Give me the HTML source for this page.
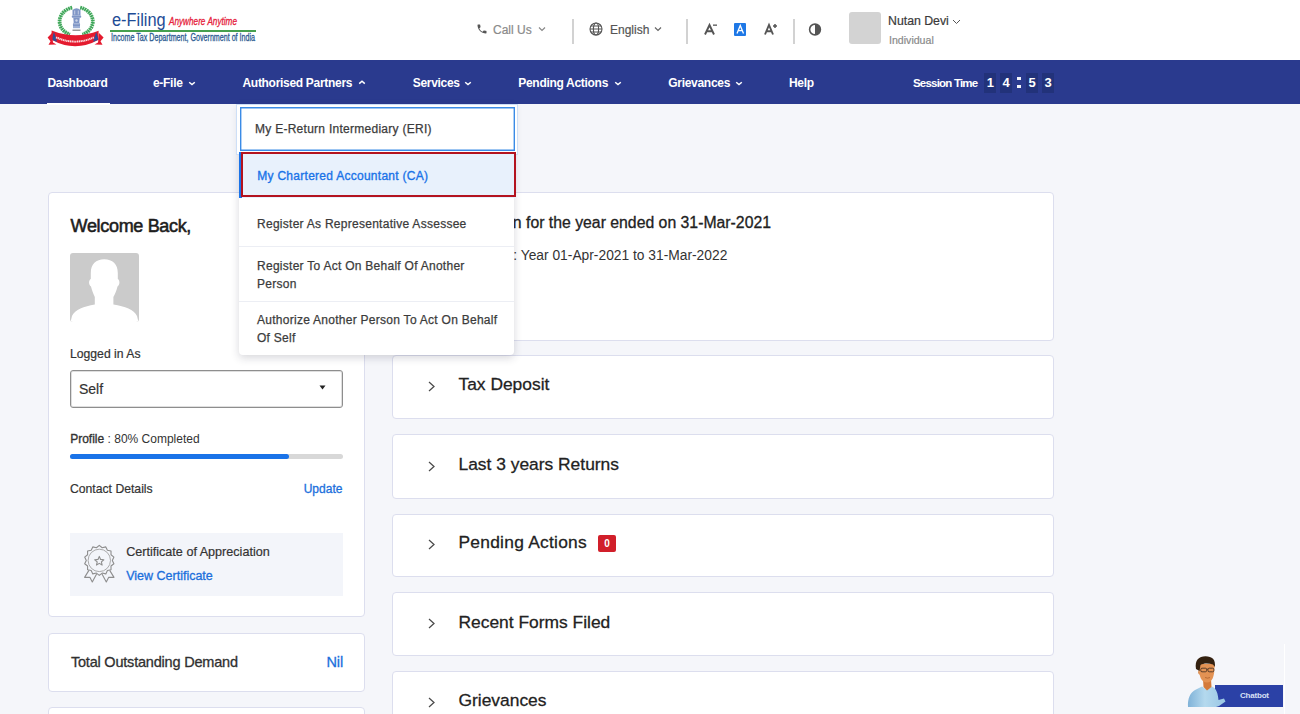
<!DOCTYPE html>
<html><head><meta charset="utf-8">
<style>
*{margin:0;padding:0;box-sizing:border-box}
html,body{width:1300px;height:714px;overflow:hidden;background:#f5f6fa;font-family:"Liberation Sans",sans-serif;color:#333}
.a{position:absolute;white-space:nowrap;line-height:1}
.s{position:absolute;overflow:visible}
#hdr{position:absolute;left:0;top:0;width:1300px;height:60px;background:#fff}
#nav{position:absolute;left:0;top:60px;width:1300px;height:44px;background:#2a3a8e}
.nv{color:#fff;font-weight:bold;font-size:12px;letter-spacing:-0.3px;top:77.1px}
.card{position:absolute;background:#fff;border:1px solid #dcdeee;border-radius:4px}
.sep{position:absolute;width:2px;background:#d2d2d2}
.rt{font-size:17.4px;color:#222;-webkit-text-stroke:0.28px #222;left:458.5px}
.dd{position:absolute;left:239px;top:104px;width:275px;height:251px;background:#fff;border-radius:0 0 4px 4px;box-shadow:0 3px 8px rgba(40,40,60,0.18)}
.di{color:#3d3d3d;font-size:12px;letter-spacing:0.27px;left:257px;-webkit-text-stroke:0.25px #3a3a3a}
.tb{position:absolute;top:73px;width:12px;height:19.5px;background:#22327a;color:#fff;font-weight:bold;font-size:13px;text-align:center;line-height:20px}
.md{-webkit-text-stroke:0.3px currentColor}
.md2{-webkit-text-stroke:0.35px currentColor}
.blue{color:#1b6fdc}
.rg{-webkit-text-stroke:0.2px currentColor}
</style></head><body>
<div id="hdr"></div>
<div id="nav"></div>

<!-- logo emblem -->
<svg class="s" style="left:46px;top:4px" width="62" height="46" viewBox="0 0 62 46">
  <g fill="none" stroke="#45ab5e">
    <path d="M26.18 3.62 A16.6 14.2 0 0 0 23.98 30.57" stroke-width="3.8" stroke-dasharray="1.7 0.6"/>
    <path d="M34.22 3.62 A16.6 14.2 0 0 1 36.42 30.57" stroke-width="3.8" stroke-dasharray="1.7 0.6"/>
  </g>
  <g fill="none" stroke="#2f9a4e" stroke-width="0.8" opacity="0.7">
    <path d="M26.18 3.62 A16.6 14.2 0 0 0 23.98 30.57"/>
    <path d="M34.22 3.62 A16.6 14.2 0 0 1 36.42 30.57"/>
  </g>
  <g fill="#7f96c6">
    <path d="M26.5 6 Q30.5 2.5 34.5 6 L34.5 11.5 L26.5 11.5 Z"/>
    <rect x="25.8" y="11.5" width="9.4" height="2.2" rx="0.8"/>
    <path d="M27.3 13.7 H33.7 L33.3 18.5 Q34.5 19.5 34 22 L27 22 Q26.5 19.5 27.7 18.5 Z"/>
    <rect x="27" y="22" width="7" height="2.2" fill="#9db0d6"/>
  </g>
  <g fill="#fff" opacity="0.6"><rect x="28.3" y="6.5" width="0.9" height="4"/><rect x="31.8" y="6.5" width="0.9" height="4"/><circle cx="30.5" cy="16.5" r="1.2"/><rect x="27.5" y="19.5" width="6" height="0.7"/></g>
  <rect x="26.5" y="25.6" width="8" height="1.2" fill="#555" opacity="0.75"/>
  <path d="M5.6 26.4 Q29.1 35.8 52.6 26.8 L52.6 35.7 Q29.1 48.7 5.6 35.7 Z" fill="#e41a2e"/>
  <path d="M5.6 35.7 L11 37.8 L8 28 Z" fill="#2d4f9a"/>
  <path d="M52.6 35.7 L47.2 37.8 L50.2 28 Z" fill="#2d4f9a"/>
  <path d="M1.6 33.5 L6 29 L7 38.5 L10.5 40.5 L2.5 40.7 L4.5 37.2 Z" fill="#e41a2e"/>
  <path d="M57.6 33.5 L53 29 L52 38.5 L48.5 40.5 L56.5 40.7 L54.5 37.2 Z" fill="#e41a2e"/>
  <path d="M10 33.3 Q29.1 42 48 33.3" fill="none" stroke="#fff" stroke-width="2" stroke-dasharray="1.3 0.5" opacity="0.85"/>
</svg>
<div class="a" style="left:112px;top:11.6px;font-size:17.6px;color:#1e4b96;transform:scaleX(0.93);transform-origin:0 0">e-Filing</div>
<div class="a" style="left:169px;top:16.4px;font-size:10.5px;color:#e6223c;font-style:italic;-webkit-text-stroke:0.3px #e6223c;transform:scaleX(0.78);transform-origin:0 0">Anywhere Anytime</div>
<div class="a" style="left:110px;top:29.6px;width:146px;height:2.2px;background:#46a04e"></div>
<div class="a" style="left:111px;top:33px;font-size:10.3px;color:#2b5a91;-webkit-text-stroke:0.3px #2b5a91;transform:scaleX(0.692);transform-origin:0 0">Income Tax Department, Government of India</div>

<!-- header right -->
<svg class="s" style="left:476px;top:23px" width="12" height="12" viewBox="0 0 24 24"><path fill="#555" d="M6.6 10.8c1.4 2.8 3.8 5.1 6.6 6.6l2.2-2.2c.3-.3.7-.4 1-.2 1.1.4 2.3.6 3.6.6.6 0 1 .4 1 1V20c0 .6-.4 1-1 1C10.6 21 3 13.4 3 4c0-.6.4-1 1-1h3.5c.6 0 1 .4 1 1 0 1.3.2 2.5.6 3.6.1.3 0 .7-.2 1l-2.3 2.2z"/></svg>
<div class="a rg" style="left:493px;top:23.8px;font-size:12px;color:#8a8a8a">Call Us</div>
<svg class="s" style="left:538px;top:26px" width="8" height="6" viewBox="0 0 8 6"><path d="M1 1.5 L4 4.5 L7 1.5" fill="none" stroke="#888" stroke-width="1.2"/></svg>
<div class="sep" style="left:572px;top:19px;height:25px"></div>
<svg class="s" style="left:589px;top:22px" width="14" height="14" viewBox="0 0 14 14"><g fill="none" stroke="#555" stroke-width="1.1"><circle cx="7" cy="7" r="6"/><ellipse cx="7" cy="7" rx="2.6" ry="6"/><path d="M1 7h12M2 4h10M2 10h10"/></g></svg>
<div class="a rg" style="left:610px;top:23.8px;font-size:12px;color:#555">English</div>
<svg class="s" style="left:654px;top:26px" width="8" height="6" viewBox="0 0 8 6"><path d="M1 1.5 L4 4.5 L7 1.5" fill="none" stroke="#666" stroke-width="1.2"/></svg>
<div class="sep" style="left:686px;top:19px;height:25px"></div>
<svg class="s" style="left:703px;top:23px" width="16" height="13" viewBox="0 0 16 13"><path d="M2 11.5 L6.5 2 L11 11.5 M3.7 8.2 H9.3" fill="none" stroke="#555" stroke-width="1.9"/><rect x="10" y="1.5" width="4" height="1.3" fill="#555"/></svg>
<div class="a" style="left:733.5px;top:23px;width:12.5px;height:12.5px;background:#1e78e6;border-radius:1px"></div>
<svg class="s" style="left:733.5px;top:23px" width="12.5" height="12.5" viewBox="0 0 12.5 12.5"><path d="M3 10.5 L6.25 2.5 L9.5 10.5 M4.3 7.6 H8.2" fill="none" stroke="#fff" stroke-width="1.3"/></svg>
<svg class="s" style="left:763px;top:23px" width="16" height="13" viewBox="0 0 16 13"><path d="M2 11.5 L6 2 L10 11.5 M3.6 8.2 H8.4" fill="none" stroke="#555" stroke-width="1.9"/><path d="M12 1 V5 M10 3 H14" stroke="#555" stroke-width="1.5"/></svg>
<div class="sep" style="left:793px;top:19px;height:25px"></div>
<svg class="s" style="left:808px;top:23px" width="14" height="13" viewBox="0 0 14 13"><circle cx="7" cy="6.5" r="5.4" fill="none" stroke="#555" stroke-width="1.6"/><path d="M7 1.1 A5.4 5.4 0 0 1 7 11.9 Z" fill="#555"/></svg>
<div class="a" style="left:849px;top:12px;width:32px;height:32px;background:#d3d3d3;border-radius:3px"></div>
<div class="a rg" style="left:888px;top:15.1px;font-size:12.3px;color:#3a3a3a">Nutan Devi</div>
<svg class="s" style="left:952px;top:18.5px" width="9" height="6" viewBox="0 0 9 6"><path d="M1 1 L4.5 4.5 L8 1" fill="none" stroke="#555" stroke-width="1"/></svg>
<div class="a rg" style="left:889px;top:35px;font-size:10.6px;color:#8a8a8a">Individual</div>

<!-- nav items -->
<div class="a nv" style="left:47.5px">Dashboard</div>
<div class="a" style="left:47px;top:102.5px;width:63px;height:2.5px;background:#fff"></div>
<div class="a nv" style="left:153px">e-File</div>
<svg class="s" style="left:188px;top:81px" width="8" height="5" viewBox="0 0 8 5"><path d="M1.2 1.2 L4 3.6 L6.8 1.2" fill="none" stroke="#fff" stroke-width="1.5"/></svg>
<div class="a nv" style="left:242.5px">Authorised Partners</div>
<svg class="s" style="left:358px;top:80px" width="8" height="5" viewBox="0 0 8 5"><path d="M1.2 3.6 L4 1.2 L6.8 3.6" fill="none" stroke="#fff" stroke-width="1.5"/></svg>
<div class="a nv" style="left:412.7px">Services</div>
<svg class="s" style="left:464px;top:81px" width="8" height="5" viewBox="0 0 8 5"><path d="M1.2 1.2 L4 3.6 L6.8 1.2" fill="none" stroke="#fff" stroke-width="1.5"/></svg>
<div class="a nv" style="left:518.3px">Pending Actions</div>
<svg class="s" style="left:614px;top:81px" width="8" height="5" viewBox="0 0 8 5"><path d="M1.2 1.2 L4 3.6 L6.8 1.2" fill="none" stroke="#fff" stroke-width="1.5"/></svg>
<div class="a nv" style="left:668.3px">Grievances</div>
<svg class="s" style="left:735px;top:81px" width="8" height="5" viewBox="0 0 8 5"><path d="M1.2 1.2 L4 3.6 L6.8 1.2" fill="none" stroke="#fff" stroke-width="1.5"/></svg>
<div class="a nv" style="left:789px">Help</div>
<div class="a" style="left:913px;top:77.5px;color:#fff;font-weight:bold;font-size:11.5px;letter-spacing:-0.8px">Session Time</div>
<div class="tb" style="left:984.4px">1</div>
<div class="tb" style="left:1000px">4</div>
<div class="a" style="left:1017.2px;top:77px;width:3.6px;height:2.8px;background:#f2f4fa"></div><div class="a" style="left:1017.2px;top:85px;width:3.6px;height:2.8px;background:#f2f4fa"></div>
<div class="tb" style="left:1026px">5</div>
<div class="tb" style="left:1042px">3</div>

<!-- left cards -->
<div class="card" style="left:48px;top:192px;width:317px;height:425px"></div>
<div class="a" style="left:70.6px;top:216.8px;font-size:18px;letter-spacing:-0.33px;color:#1d1d1d;-webkit-text-stroke:0.55px #1d1d1d">Welcome Back,</div>
<div class="a" style="left:69.5px;top:252.6px;width:69px;height:69px;background:#cbcbcb;border-radius:3px;overflow:hidden">
  <svg width="69" height="69" viewBox="0 0 69 69"><path fill="#fff" d="M34.2 6.3 C26 6.3 20.8 11 20.8 20 L20.8 26 C18.5 27 18.5 32 21 33.5 C22 38 23.5 41 24.8 44 L24.8 51.5 C14 53.5 5 56.5 2 63 L0.5 69 L68.5 69 L67 63 C64 56.5 55 53.5 43.4 51.5 L43.4 44 C45 41 46.5 38 47.5 33.5 C50 32 50 27 47.8 26 L47.8 20 C47.8 11 42.5 6.3 34.2 6.3 Z"/></svg>
</div>
<div class="a rg" style="left:70px;top:347.5px;font-size:12.2px;color:#333">Logged in As</div>
<div class="a" style="left:70px;top:370px;width:273px;height:38px;border:1px solid #8e8e8e;border-radius:3px;background:#fff;box-shadow:inset 0 0 0 1px rgba(150,150,150,0.3)"></div>
<div class="a rg" style="left:79px;top:381.9px;font-size:14px;color:#333">Self</div>
<svg class="s" style="left:319px;top:385px" width="7" height="5" viewBox="0 0 7 5"><path d="M0.5 0.5 H6.5 L3.5 4.5 Z" fill="#222"/></svg>
<div class="a" style="left:70.2px;top:432.8px;font-size:12px;color:#333"><span class="md2">Profile</span> : 80% Completed</div>
<div class="a" style="left:70px;top:454px;width:273px;height:5px;background:#d8d8d8;border-radius:3px"></div>
<div class="a" style="left:70px;top:454px;width:219px;height:5px;background:#1a73e8;border-radius:3px"></div>
<div class="a rg" style="left:70px;top:483.1px;font-size:12.2px;color:#333">Contact Details</div>
<div class="a blue md" style="left:303.7px;top:483.2px;font-size:12px">Update</div>
<div class="a" style="left:70px;top:533px;width:273px;height:63px;background:#f3f5fa"></div>
<svg class="s" style="left:83px;top:544px" width="33" height="40" viewBox="0 0 33 40">
  <g fill="none" stroke="#8e8e8e" stroke-width="1.1" stroke-linejoin="round">
    <path d="M5.9 26.4 L1.6 33.4 L7 33.4 L9.3 38 L13.6 29.9"/>
    <path d="M26.7 26.4 L31 33.4 L25.6 33.4 L23.3 38 L19 29.9"/>
    <path fill="#f3f5fa" d="M16.30 1.40 L19.19 3.73 L22.81 2.89 L24.41 6.24 L28.03 7.05 L28.01 10.76 L30.92 13.06 L29.30 16.40 L30.92 19.74 L28.01 22.04 L28.03 25.75 L24.41 26.56 L22.81 29.91 L19.19 29.07 L16.30 31.40 L13.41 29.07 L9.79 29.91 L8.19 26.56 L4.57 25.75 L4.59 22.04 L1.68 19.74 L3.30 16.40 L1.68 13.06 L4.59 10.76 L4.57 7.05 L8.19 6.24 L9.79 2.89 L13.41 3.73 Z"/>
    <circle cx="16.3" cy="16.4" r="11.2" stroke="#a0a0a0" stroke-width="0.9"/>
    <path d="M16.30 12.40 L17.59 15.42 L20.87 15.72 L18.39 17.88 L19.12 21.08 L16.30 19.40 L13.48 21.08 L14.21 17.88 L11.73 15.72 L15.01 15.42 Z"/>
  </g>
</svg>
<div class="a rg" style="left:126.2px;top:546px;font-size:12.6px;color:#333">Certificate of Appreciation</div>
<div class="a blue md" style="left:126.2px;top:569.9px;font-size:12.5px">View Certificate</div>

<div class="card" style="left:48px;top:633px;width:317px;height:59px"></div>
<div class="a md" style="left:70.9px;top:655px;font-size:14.5px;letter-spacing:-0.2px;color:#303030">Total Outstanding Demand</div>
<div class="a blue md" style="left:326.4px;top:655px;font-size:14.5px">Nil</div>
<div class="card" style="left:48px;top:707px;width:317px;height:59px"></div>

<!-- right cards -->
<div class="card" style="left:392px;top:192px;width:662px;height:149px"></div>
<div class="a md" style="right:529px;top:214.8px;font-size:15.8px;color:#222">Return for the year ended on 31-Mar-2021</div>
<div class="a" style="right:572.7px;top:248.8px;font-size:13.8px;color:#333">Period : Year 01-Apr-2021 to 31-Mar-2022</div>

<div class="card" style="left:392px;top:355px;width:662px;height:63.5px"></div>
<svg class="s" style="left:427px;top:380.7px" width="9" height="11" viewBox="0 0 9 11"><path d="M2 1 L7 5.5 L2 10" fill="none" stroke="#4a4a4a" stroke-width="1.25"/></svg>
<div class="a rt" style="top:375.7px">Tax Deposit</div>

<div class="card" style="left:392px;top:434px;width:662px;height:64.5px"></div>
<svg class="s" style="left:427px;top:460.7px" width="9" height="11" viewBox="0 0 9 11"><path d="M2 1 L7 5.5 L2 10" fill="none" stroke="#4a4a4a" stroke-width="1.25"/></svg>
<div class="a rt" style="top:456.3px">Last 3 years Returns</div>

<div class="card" style="left:392px;top:513.5px;width:662px;height:63px"></div>
<svg class="s" style="left:427px;top:538.7px" width="9" height="11" viewBox="0 0 9 11"><path d="M2 1 L7 5.5 L2 10" fill="none" stroke="#4a4a4a" stroke-width="1.25"/></svg>
<div class="a rt" style="top:533.8px;letter-spacing:0.25px">Pending Actions</div>
<div class="a" style="left:598.4px;top:534.5px;width:17.3px;height:17px;background:#d11f2a;border-radius:2px;color:#fff;font-size:10px;font-weight:bold;text-align:center;line-height:17px">0</div>

<div class="card" style="left:392px;top:592px;width:662px;height:64px"></div>
<svg class="s" style="left:427px;top:617.7px" width="9" height="11" viewBox="0 0 9 11"><path d="M2 1 L7 5.5 L2 10" fill="none" stroke="#4a4a4a" stroke-width="1.25"/></svg>
<div class="a rt" style="top:614.2px">Recent Forms Filed</div>

<div class="card" style="left:392px;top:671px;width:662px;height:64px"></div>
<svg class="s" style="left:427px;top:696.7px" width="9" height="11" viewBox="0 0 9 11"><path d="M2 1 L7 5.5 L2 10" fill="none" stroke="#4a4a4a" stroke-width="1.25"/></svg>
<div class="a rt" style="top:692.1px">Grievances</div>

<!-- dropdown -->
<div class="dd"></div>
<div class="a" style="left:236px;top:104px;width:282px;height:50.5px;border:1px solid #cddff7;background:#fff"></div>
<div class="a" style="left:239.5px;top:107px;width:275px;height:44px;border:1px solid #3a8be6;box-shadow:inset 0 0 0 0.4px #3a8be6"></div>
<div class="a di" style="left:255px;top:123px">My E-Return Intermediary (ERI)</div>
<div class="a" style="left:239px;top:152px;width:277px;height:46px;background:#e8f1fc"></div>
<div class="a" style="left:239px;top:152px;width:2.5px;height:46px;background:#1a73e8"></div>
<div class="a" style="left:241px;top:152px;width:275px;height:45px;border:2px solid #b3131f"></div>
<div class="a di" style="left:257.3px;top:170px;color:#1a73e8;-webkit-text-stroke:0.35px #1a73e8">My Chartered Accountant (CA)</div>
<div class="a di" style="top:217.5px">Register As Representative Assessee</div>
<div class="a" style="left:239px;top:246px;width:275px;height:1px;background:#eceef4"></div>
<div class="a di" style="top:260.3px">Register To Act On Behalf Of Another</div>
<div class="a di" style="top:277.6px">Person</div>
<div class="a" style="left:239px;top:301px;width:275px;height:1px;background:#eceef4"></div>
<div class="a di" style="top:313.9px">Authorize Another Person To Act On Behalf</div>
<div class="a di" style="top:331.5px">Of Self</div>

<!-- chatbot -->
<div class="a" style="left:1283.5px;top:644px;width:1px;height:70px;background:#fff"></div>
<div class="a" style="left:1214.5px;top:685px;width:68.5px;height:22px;background:#2b41a6"></div>
<div class="a" style="left:1240px;top:692px;font-size:8px;font-weight:bold;color:#d8e0f5;letter-spacing:-0.2px">Chatbot</div>
<svg class="s" style="left:1186px;top:655px" width="42" height="53" viewBox="0 0 42 53">
  <defs><linearGradient id="sw" x1="0" y1="0" x2="1" y2="0"><stop offset="0" stop-color="#80b2d8"/><stop offset="0.45" stop-color="#b4d9ee"/><stop offset="1" stop-color="#98c6e4"/></linearGradient></defs>
  <path d="M2 52 C1.5 44 4 37 10 34.5 L16 31.5 L21 35 L26 31.5 C30.5 33.5 32 39 32.5 45 L38 43.5 L39.5 46.5 L33 51 L30 52 Z" fill="url(#sw)"/>
  <path d="M17 24 L17.5 32 L21 35.5 L25.5 32 L25 24 Z" fill="#d47a3a"/>
  <path d="M13 9 C12.5 22 15.5 27.5 21 27.5 C26 27.5 28.8 22 28.5 9 Z" fill="#e39253"/>
  <path d="M13 15 C11.5 17 12 19.5 14 19.5 Z" fill="#d98645"/>
  <path d="M10 14 C8.5 5 13 1.2 19.5 1.2 C26 1.2 30 4.5 28.8 12 L27 9.5 C23 8 17 8 14.5 10 L13.5 16 Z" fill="#33200f"/>
  <rect x="14.8" y="13.2" width="5.8" height="3.6" rx="1.2" fill="none" stroke="#3a2a20" stroke-width="0.8"/>
  <rect x="22" y="13.2" width="5.8" height="3.6" rx="1.2" fill="none" stroke="#3a2a20" stroke-width="0.8"/>
  <path d="M20.6 14.2 H22" stroke="#3a2a20" stroke-width="0.7"/>
  <path d="M19 22.5 Q21.5 23.8 24 22.5" fill="none" stroke="#a85a2a" stroke-width="0.7"/>
</svg>

</body></html>
